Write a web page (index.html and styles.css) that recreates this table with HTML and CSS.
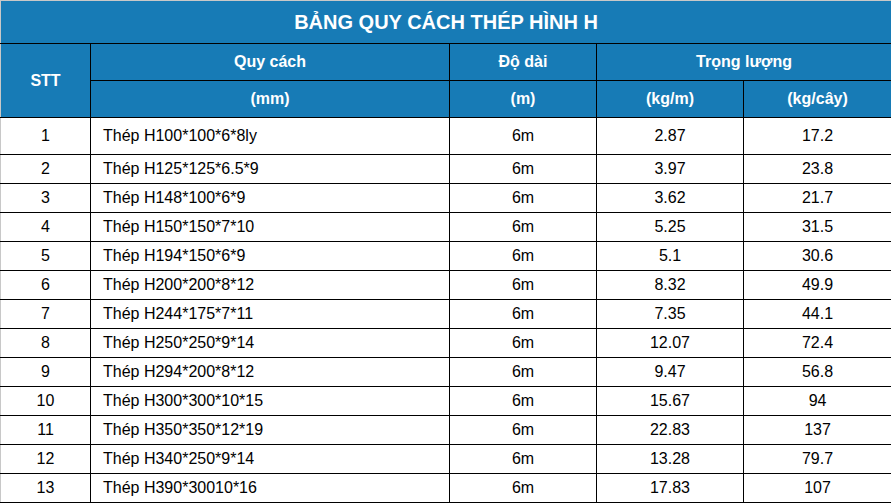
FILE: index.html
```html
<!DOCTYPE html>
<html lang="vi">
<head>
<meta charset="utf-8">
<title>Bảng quy cách thép hình H</title>
<link rel="stylesheet" href="styles.css">
</head>
<body>
<table class="spec">
  <colgroup>
    <col class="c-stt">
    <col class="c-name">
    <col class="c-len">
    <col class="c-kgm">
    <col class="c-kgc">
  </colgroup>
  <thead>
    <tr class="r-title"><th colspan="5" class="title">BẢNG QUY CÁCH THÉP HÌNH H</th></tr>
    <tr class="r-head"><th rowspan="2">STT</th><th>Quy cách</th><th>Độ dài</th><th colspan="2" class="last">Trọng lượng</th></tr>
    <tr class="r-head"><th>(mm)</th><th>(m)</th><th>(kg/m)</th><th class="last">(kg/cây)</th></tr>
  </thead>
  <tbody>
    <tr class="first"><td>1</td><td class="name">Thép H100*100*6*8ly</td><td>6m</td><td>2.87</td><td>17.2</td></tr>
    <tr><td>2</td><td class="name">Thép H125*125*6.5*9</td><td>6m</td><td>3.97</td><td>23.8</td></tr>
    <tr><td>3</td><td class="name">Thép H148*100*6*9</td><td>6m</td><td>3.62</td><td>21.7</td></tr>
    <tr><td>4</td><td class="name">Thép H150*150*7*10</td><td>6m</td><td>5.25</td><td>31.5</td></tr>
    <tr><td>5</td><td class="name">Thép H194*150*6*9</td><td>6m</td><td>5.1</td><td>30.6</td></tr>
    <tr><td>6</td><td class="name">Thép H200*200*8*12</td><td>6m</td><td>8.32</td><td>49.9</td></tr>
    <tr><td>7</td><td class="name">Thép H244*175*7*11</td><td>6m</td><td>7.35</td><td>44.1</td></tr>
    <tr><td>8</td><td class="name">Thép H250*250*9*14</td><td>6m</td><td>12.07</td><td>72.4</td></tr>
    <tr><td>9</td><td class="name">Thép H294*200*8*12</td><td>6m</td><td>9.47</td><td>56.8</td></tr>
    <tr><td>10</td><td class="name">Thép H300*300*10*15</td><td>6m</td><td>15.67</td><td>94</td></tr>
    <tr><td>11</td><td class="name">Thép H350*350*12*19</td><td>6m</td><td>22.83</td><td>137</td></tr>
    <tr><td>12</td><td class="name">Thép H340*250*9*14</td><td>6m</td><td>13.28</td><td>79.7</td></tr>
    <tr><td>13</td><td class="name">Thép H390*30010*16</td><td>6m</td><td>17.83</td><td>107</td></tr>
  </tbody>
</table>
</body>
</html>
```
FILE: styles.css
```css
html, body {
  margin: 0;
  padding: 0;
  background: #ffffff;
}

.spec {
  border-collapse: collapse;
  table-layout: fixed;
  width: 891px;
  font-family: "Liberation Sans", Arial, sans-serif;
  font-size: 16px;
  color: #000;
  border-top: 1px solid #c8c8c8;
  border-left: 1px solid #c8c8c8;
}

.c-stt { width: 90px; }
.c-name { width: 359px; }
.c-len { width: 147px; }
.c-kgm { width: 147px; }
.c-kgc { width: 148px; }

.spec th,
.spec td {
  padding: 0;
  text-align: center;
  vertical-align: middle;
  border: 1px solid #000;
}

.spec thead th {
  background: #177bb6;
  color: #ffffff;
  font-weight: bold;
}

.spec thead th.title {
  font-size: 20px;
  border-top: 1px solid #c8c8c8;
  border-left: 1px solid #c8c8c8;
  border-right-color: #0f5f8f;
}

.spec thead th:first-child { border-left: 1px solid #c8c8c8; }
.spec thead th.last { border-right-color: #0f5f8f; }

.spec tbody td:first-child { border-left: 1px solid #c8c8c8; }

.r-title { height: 43px; }
.r-head { height: 37px; }
.spec tbody tr { height: 29px; }
.spec tbody tr.first { height: 37px; }

.spec td.name {
  text-align: left;
  padding-left: 12px;
}
```
